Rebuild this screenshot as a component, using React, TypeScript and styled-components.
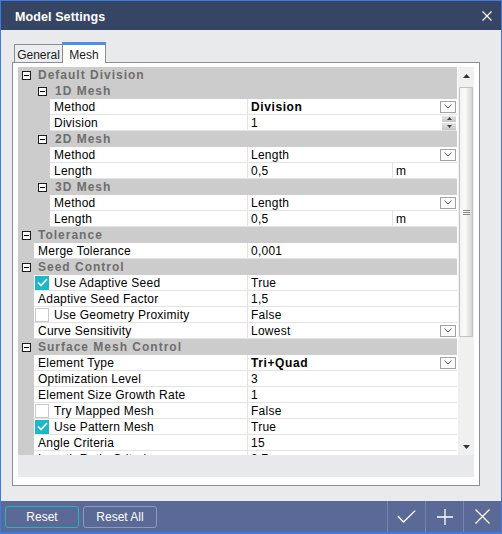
import React from 'react';
import styled, { createGlobalStyle } from 'styled-components';

const GlobalStyle = createGlobalStyle`
  html, body { margin: 0; padding: 0; }
  body {
    width: 502px;
    height: 534px;
    overflow: hidden;
    font-family: "Liberation Sans", Arial, sans-serif;
  }
  * { box-sizing: border-box; }
`;

type Item =
  | { t: 'cat'; level: 0 | 1; label: string }
  | {
      t: 'prop';
      level: 1 | 2;
      label: string;
      value: string;
      bold?: boolean;
      unit?: string;
      ctrl?: 'drop' | 'spin';
      check?: boolean;
    };

const items: Item[] = [
  { t: 'cat', level: 0, label: 'Default Division' },
  { t: 'cat', level: 1, label: '1D Mesh' },
  { t: 'prop', level: 2, label: 'Method', value: 'Division', bold: true, ctrl: 'drop' },
  { t: 'prop', level: 2, label: 'Division', value: '1', ctrl: 'spin' },
  { t: 'cat', level: 1, label: '2D Mesh' },
  { t: 'prop', level: 2, label: 'Method', value: 'Length', ctrl: 'drop' },
  { t: 'prop', level: 2, label: 'Length', value: '0,5', unit: 'm' },
  { t: 'cat', level: 1, label: '3D Mesh' },
  { t: 'prop', level: 2, label: 'Method', value: 'Length', ctrl: 'drop' },
  { t: 'prop', level: 2, label: 'Length', value: '0,5', unit: 'm' },
  { t: 'cat', level: 0, label: 'Tolerance' },
  { t: 'prop', level: 1, label: 'Merge Tolerance', value: '0,001' },
  { t: 'cat', level: 0, label: 'Seed Control' },
  { t: 'prop', level: 1, label: 'Use Adaptive Seed', value: 'True', check: true },
  { t: 'prop', level: 1, label: 'Adaptive Seed Factor', value: '1,5' },
  { t: 'prop', level: 1, label: 'Use Geometry Proximity', value: 'False', check: false },
  { t: 'prop', level: 1, label: 'Curve Sensitivity', value: 'Lowest', ctrl: 'drop' },
  { t: 'cat', level: 0, label: 'Surface Mesh Control' },
  { t: 'prop', level: 1, label: 'Element Type', value: 'Tri+Quad', bold: true, ctrl: 'drop' },
  { t: 'prop', level: 1, label: 'Optimization Level', value: '3' },
  { t: 'prop', level: 1, label: 'Element Size Growth Rate', value: '1' },
  { t: 'prop', level: 1, label: 'Try Mapped Mesh', value: 'False', check: false },
  { t: 'prop', level: 1, label: 'Use Pattern Mesh', value: 'True', check: true },
  { t: 'prop', level: 1, label: 'Angle Criteria', value: '15' },
  { t: 'prop', level: 1, label: 'Length Ratio Criteria', value: '0,7' },
];

/* ---------- window ---------- */
const Window = styled.div`
  width: 502px;
  height: 534px;
  border: 1px solid #3d7be0;
  border-bottom-width: 2px;
  display: flex;
  flex-direction: column;
  background: #e9eaec;
`;

const TitleBar = styled.div`
  height: 29px;
  flex: none;
  background: #354563;
  display: flex;
  align-items: center;
  justify-content: space-between;
  padding: 3px 9px 0 14px;
`;

const Title = styled.div`
  color: #ffffff;
  font-weight: bold;
  font-size: 12.5px;
  letter-spacing: 0.1px;
`;

const CloseBtn = styled.div`
  width: 10px;
  height: 10px;
  display: flex;
  margin-top: -3px;
`;

const Body = styled.div`
  flex: 1;
  display: flex;
  flex-direction: column;
  padding: 12px 21px 15px 11px;
`;

const Tabs = styled.div`
  height: 20px;
  display: flex;
  align-items: flex-end;
  padding-left: 2px;
  position: relative;
  z-index: 1;
`;

const Tab = styled.div<{ $active?: boolean }>`
  font-size: 12px;
  color: #1a1a1a;
  display: flex;
  align-items: center;
  justify-content: center;
  border: 1px solid #8c8c94;
  border-bottom: none;
  ${(p) =>
    p.$active
      ? `
    width: 44px;
    height: 21px;
    margin-bottom: -1px;
    background: #ffffff;
    border-top: 3px solid #4a8fe6;
    padding-top: 2px;
  `
      : `
    width: 48px;
    height: 18px;
    background: #ecedef;
    border-right: none;
    padding-top: 2px;
  `}
`;

const Panel = styled.div`
  height: 424px;
  border: 1px solid #8c8c94;
  background: #ffffff;
  padding: 4px 5px 8px 5px;
  display: flex;
  flex-direction: column;
`;

const GridBox = styled.div`
  height: 388px;
  display: flex;
  gap: 1px;
  overflow: hidden;
`;

const RowList = styled.div`
  width: 439px;
  overflow: hidden;
  display: flex;
  flex-direction: column;
`;

const DescBox = styled.div`
  height: 22px;
  background: #e8e9eb;
`;

/* ---------- rows ---------- */
const CatRow = styled.div<{ $level: number }>`
  flex: none;
  height: 16px;
  background: #cccccc;
  display: flex;
  align-items: center;
  gap: ${(p) => (p.$level === 0 ? 7 : 8)}px;
  padding-left: ${(p) => (p.$level === 0 ? 4 : 20)}px;
`;

const Expander = styled.div`
  width: 9px;
  height: 9px;
  border: 1px solid #1e1e1e;
  background: #ffffff;
  position: relative;
  &::after {
    content: '';
    position: absolute;
    left: 1px;
    right: 1px;
    top: 3px;
    height: 1px;
    background: #000;
  }
`;

const CatLabel = styled.span`
  font-size: 12px;
  font-weight: bold;
  letter-spacing: 1px;
  color: #6e6e6e;
  line-height: 16px;
`;

const PropRow = styled.div`
  flex: none;
  height: 16px;
  display: flex;
  background: #cccccc;
`;

const Indent = styled.div<{ $w: number }>`
  width: ${(p) => p.$w}px;
  flex: none;
`;

const LabelCell = styled.div<{ $w: number; $check?: boolean }>`
  width: ${(p) => p.$w}px;
  flex: none;
  background: #ffffff;
  border-right: 1px solid #e3e3e3;
  border-bottom: 1px solid #e3e3e3;
  display: flex;
  align-items: center;
  gap: 5px;
  padding-left: ${(p) => (p.$check ? 1 : 4)}px;
  font-size: 12px;
  letter-spacing: 0.25px;
  color: #000;
  white-space: nowrap;
  overflow: hidden;
`;

const CheckBox = styled.div<{ $on: boolean }>`
  width: 14px;
  height: 14px;
  flex: none;
  display: flex;
  align-items: center;
  justify-content: center;
  background: ${(p) => (p.$on ? '#1bb8c9' : '#ffffff')};
  border: 1px solid ${(p) => (p.$on ? '#1bb8c9' : '#c9c9c9')};
`;

const ValueCell = styled.div`
  flex: 1;
  min-width: 0;
  background: #ffffff;
  border-bottom: 1px solid #e3e3e3;
  display: flex;
  align-items: center;
`;

const ValueText = styled.span<{ $bold?: boolean }>`
  font-size: 12px;
  letter-spacing: ${(p) => (p.$bold ? 0.6 : 0.25)}px;
  font-weight: ${(p) => (p.$bold ? 'bold' : 'normal')};
  padding-left: 3px;
  color: #000;
  white-space: nowrap;
`;

const ValueMain = styled.div`
  width: 145px;
  height: 100%;
  border-right: 1px solid #e3e3e3;
  display: flex;
  align-items: center;
`;

const UnitText = styled.span`
  font-size: 12px;
  padding-left: 3px;
  color: #000;
`;

const DropBtn = styled.div`
  margin-left: auto;
  margin-right: 1px;
  width: 16px;
  height: 12px;
  border: 1px solid #a3a3a3;
  background: #ffffff;
  display: flex;
  align-items: center;
  justify-content: center;
`;

const Spin = styled.div`
  margin-left: auto;
  margin-right: 1px;
  width: 14px;
  height: 14px;
  display: flex;
  flex-direction: column;
  gap: 1px;
`;

const SpinHalf = styled.div`
  flex: 1;
  background: linear-gradient(#e4e4e4, #c6c6c6);
  display: flex;
  align-items: center;
  justify-content: center;
`;

/* ---------- scrollbar ---------- */
const ScrollBar = styled.div`
  width: 16px;
  background: #f0f0f0;
  display: flex;
  flex-direction: column;
`;

const ScrollBtn = styled.div`
  height: 17px;
  flex: none;
  display: flex;
  align-items: center;
  justify-content: center;
`;

const Track = styled.div`
  flex: 1;
  padding: 3px 1px 0 1px;
`;

const Thumb = styled.div`
  height: 250px;
  border: 1px solid #c2c2c2;
  border-radius: 1px;
  background: linear-gradient(to right, #f2f2f2, #fbfbfb 40%, #e2e2e2 80%, #d2d2d2);
  display: flex;
  flex-direction: column;
  align-items: center;
  justify-content: center;
  gap: 1px;
`;

const Grip = styled.div`
  width: 7px;
  height: 1px;
  background: #8a8a8a;
`;

/* ---------- bottom bar ---------- */
const BottomBar = styled.div`
  height: 31px;
  flex: none;
  background: #5a6996;
  display: flex;
  align-items: center;
  padding-left: 4px;
  gap: 4px;
`;

const BarButton = styled.button<{ $focus?: boolean }>`
  width: 74px;
  height: 22px;
  border: 1px solid ${(p) => (p.$focus ? '#22b7bf' : '#8d9ac4')};
  border-radius: 3px;
  background: transparent;
  color: #ffffff;
  font-family: "Liberation Sans", Arial, sans-serif;
  font-size: 12px;
  padding: 0;
`;

const IconGroup = styled.div`
  margin-left: auto;
  display: flex;
  height: 100%;
`;

const IconCell = styled.div`
  width: 38px;
  height: 100%;
  border-left: 1px solid #7686b4;
  display: flex;
  align-items: center;
  justify-content: center;
`;

const Tri = ({ down }: { down?: boolean }) => (
  <svg width="7" height="4" viewBox="0 0 7 4">
    <polygon points={down ? '0,0 7,0 3.5,4' : '0,4 7,4 3.5,0'} fill="#333" />
  </svg>
);

function PropertyRow({ item }: { item: Item }) {
  if (item.t === 'cat') {
    return (
      <CatRow $level={item.level}>
        <Expander />
        <CatLabel>{item.label}</CatLabel>
      </CatRow>
    );
  }
  const indent = item.level === 1 ? 16 : 32;
  const hasCheck = item.check !== undefined;
  return (
    <PropRow>
      <Indent $w={indent} />
      <LabelCell $w={230 - indent} $check={hasCheck}>
        {hasCheck && (
          <CheckBox $on={!!item.check}>
            {item.check && (
              <svg width="11" height="9" viewBox="0 0 11 9">
                <path d="M1 4.5 L4 7.5 L10 1" fill="none" stroke="#fff" strokeWidth="1.6" />
              </svg>
            )}
          </CheckBox>
        )}
        <span>{item.label}</span>
      </LabelCell>
      <ValueCell>
        {item.unit ? (
          <>
            <ValueMain>
              <ValueText>{item.value}</ValueText>
            </ValueMain>
            <UnitText>{item.unit}</UnitText>
          </>
        ) : (
          <ValueText $bold={item.bold}>{item.value}</ValueText>
        )}
        {item.ctrl === 'drop' && (
          <DropBtn>
            <svg width="8" height="5" viewBox="0 0 8 5">
              <path d="M0.5 0.5 L4 4 L7.5 0.5" fill="none" stroke="#555" strokeWidth="1" />
            </svg>
          </DropBtn>
        )}
        {item.ctrl === 'spin' && (
          <Spin>
            <SpinHalf>
              <svg width="5" height="3" viewBox="0 0 5 3">
                <polygon points="0,3 5,3 2.5,0" fill="#444" />
              </svg>
            </SpinHalf>
            <SpinHalf>
              <svg width="5" height="3" viewBox="0 0 5 3">
                <polygon points="0,0 5,0 2.5,3" fill="#444" />
              </svg>
            </SpinHalf>
          </Spin>
        )}
      </ValueCell>
    </PropRow>
  );
}

export default function App() {
  return (
    <>
      <GlobalStyle />
      <Window>
        <TitleBar>
          <Title>Model Settings</Title>
          <CloseBtn>
            <svg width="10" height="10" viewBox="0 0 10 10">
              <path d="M0.5 0.5 L9.5 9.5 M9.5 0.5 L0.5 9.5" stroke="#fff" strokeWidth="1.2" />
            </svg>
          </CloseBtn>
        </TitleBar>
        <Body>
          <Tabs>
            <Tab>General</Tab>
            <Tab $active>Mesh</Tab>
          </Tabs>
          <Panel>
            <GridBox>
              <RowList>
                {items.map((it, i) => (
                  <PropertyRow key={i} item={it} />
                ))}
              </RowList>
              <ScrollBar>
                <ScrollBtn>
                  <Tri />
                </ScrollBtn>
                <Track>
                  <Thumb>
                    <Grip />
                    <Grip />
                    <Grip />
                  </Thumb>
                </Track>
                <ScrollBtn>
                  <Tri down />
                </ScrollBtn>
              </ScrollBar>
            </GridBox>
            <DescBox />
          </Panel>
        </Body>
        <BottomBar>
          <BarButton $focus>Reset</BarButton>
          <BarButton>Reset All</BarButton>
          <IconGroup>
            <IconCell>
              <svg width="19" height="13" viewBox="0 0 19 13">
                <path d="M0.8 6 L6.5 12 L18.2 0.6" fill="none" stroke="#fff" strokeWidth="1.3" />
              </svg>
            </IconCell>
            <IconCell>
              <svg width="16" height="16" viewBox="0 0 16 16">
                <path d="M8 0 V16 M0 8 H16" stroke="#fff" strokeWidth="1.3" />
              </svg>
            </IconCell>
            <IconCell>
              <svg width="15" height="15" viewBox="0 0 15 15">
                <path d="M0.5 0.5 L14.5 14.5 M14.5 0.5 L0.5 14.5" stroke="#fff" strokeWidth="1.3" />
              </svg>
            </IconCell>
          </IconGroup>
        </BottomBar>
      </Window>
    </>
  );
}
